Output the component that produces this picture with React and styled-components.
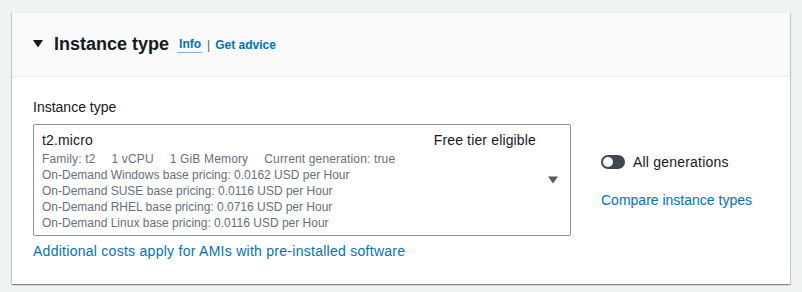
import React from "react";
import styled, { createGlobalStyle } from "styled-components";

const Global = createGlobalStyle`
  html, body { margin: 0; padding: 0; background: #f2f3f3; }
  body { font-family: "Liberation Sans", Arial, sans-serif; color: #16191f; }
`;

const Page = styled.div`
  padding: 12px 12px 10px 12px;
`;

const Card = styled.section`
  background: #fff;
  border-top: 1px solid #eaeded;
  box-shadow: 0 1px 1px 0 rgba(0, 28, 36, 0.3), 1px 1px 1px 0 rgba(0, 28, 36, 0.15), -1px 1px 1px 0 rgba(0, 28, 36, 0.15);
`;

const Header = styled.header`
  background: #fafafa;
  border-bottom: 1px solid #eaeded;
  height: 64px;
  padding: 0 20px 2px 21px;
  box-sizing: border-box;
  display: flex;
  align-items: center;
  gap: 11px;
`;

const Caret = styled.svg`
  width: 10px;
  height: 8px;
  flex: none;
  margin-top: 1px;
`;

const Title = styled.h2`
  margin: 0;
  font-size: 18px;
  font-weight: 700;
  line-height: 22px;
`;

const HeaderLinks = styled.div`
  display: flex;
  align-items: center;
  margin-left: -3px;
  margin-top: 2px;
  font-size: 12px;
  font-weight: 700;
  gap: 5px;
`;

const InfoLink = styled.a`
  color: #0073bb;
  text-decoration: none;
  border-bottom: 1px solid #7fb1d9;
  padding: 0 1px 1px 2px;
`;

const Sep = styled.span`
  color: #545b64;
  font-weight: 400;
`;

const PlainLink = styled.a`
  color: #0073bb;
  text-decoration: none;
  font-weight: ${(p) => (p.$bold ? 700 : 400)};
  font-size: ${(p) => p.$size || 14}px;
`;

const Body = styled.div`
  padding: 19px 21px 22px 21px;
`;

const Label = styled.label`
  display: block;
  font-size: 14px;
  line-height: 22px;
  margin-bottom: 6px;
  color: #16191f;
`;

const Row = styled.div`
  display: flex;
  align-items: flex-start;
  gap: 30px;
`;

const Column = styled.div`
  display: flex;
  flex-direction: column;
`;

const Select = styled.div`
  width: 538px;
  box-sizing: border-box;
  border: 1px solid #879596;
  border-radius: 2px;
  padding: 4px 12px 4px 8px;
  display: flex;
  align-items: center;
  gap: 12px;
`;

const SelectContent = styled.div`
  flex: 1;
`;

const TopLine = styled.div`
  display: flex;
  justify-content: space-between;
  font-size: 14px;
  line-height: 22px;
  letter-spacing: 0.15px;
`;

const Detail = styled.div`
  font-size: 12px;
  line-height: 16px;
  color: #687078;
  display: flex;
  gap: ${(p) => (p.$tags ? "16px" : "0")};
  letter-spacing: ${(p) => (p.$tags ? "0.15px" : "0")};
`;

const Arrow = styled.svg`
  width: 10px;
  height: 8px;
  flex: none;
`;

const Hint = styled.div`
  margin-top: 4px;
  line-height: 22px;
  letter-spacing: 0.27px;
`;

const Side = styled.div`
  padding-top: 27px;
  display: flex;
  flex-direction: column;
  align-items: flex-start;
  gap: 16px;
  line-height: 22px;
`;

const ToggleRow = styled.div`
  display: flex;
  align-items: center;
  gap: 8px;
  font-size: 14px;
  line-height: 22px;
  letter-spacing: 0.2px;
`;

const Toggle = styled.span`
  width: 24px;
  height: 14px;
  border-radius: 8px;
  background: #414750;
  position: relative;
  flex: none;
  &::after {
    content: "";
    position: absolute;
    left: 2px;
    top: 2px;
    width: 10px;
    height: 10px;
    border-radius: 50%;
    background: #fff;
  }
`;

export default function App() {
  return (
    <>
      <Global />
      <Page>
        <Card>
          <Header>
            <Caret viewBox="0 0 10 8">
              <path d="M0 0 H10 L5 7.5 Z" fill="#16191f" />
            </Caret>
            <Title>Instance type</Title>
            <HeaderLinks>
              <InfoLink href="#">Info</InfoLink>
              <Sep>|</Sep>
              <PlainLink href="#" $bold $size={12}>Get advice</PlainLink>
            </HeaderLinks>
          </Header>
          <Body>
            <Label>Instance type</Label>
            <Row>
              <Column>
                <Select>
                  <SelectContent>
                    <TopLine>
                      <span>t2.micro</span>
                      <span>Free tier eligible</span>
                    </TopLine>
                    <Detail $tags>
                      <span>Family: t2</span>
                      <span>1 vCPU</span>
                      <span>1 GiB Memory</span>
                      <span>Current generation: true</span>
                    </Detail>
                    <Detail>On-Demand Windows base pricing: 0.0162 USD per Hour</Detail>
                    <Detail>On-Demand SUSE base pricing: 0.0116 USD per Hour</Detail>
                    <Detail>On-Demand RHEL base pricing: 0.0716 USD per Hour</Detail>
                    <Detail>On-Demand Linux base pricing: 0.0116 USD per Hour</Detail>
                  </SelectContent>
                  <Arrow viewBox="0 0 10 8">
                    <path d="M0 0.5 H10 L5 7.5 Z" fill="#545b64" />
                  </Arrow>
                </Select>
                <Hint>
                  <PlainLink href="#">Additional costs apply for AMIs with pre-installed software</PlainLink>
                </Hint>
              </Column>
              <Side>
                <ToggleRow>
                  <Toggle />
                  <span>All generations</span>
                </ToggleRow>
                <PlainLink href="#">Compare instance types</PlainLink>
              </Side>
            </Row>
          </Body>
        </Card>
      </Page>
    </>
  );
}
